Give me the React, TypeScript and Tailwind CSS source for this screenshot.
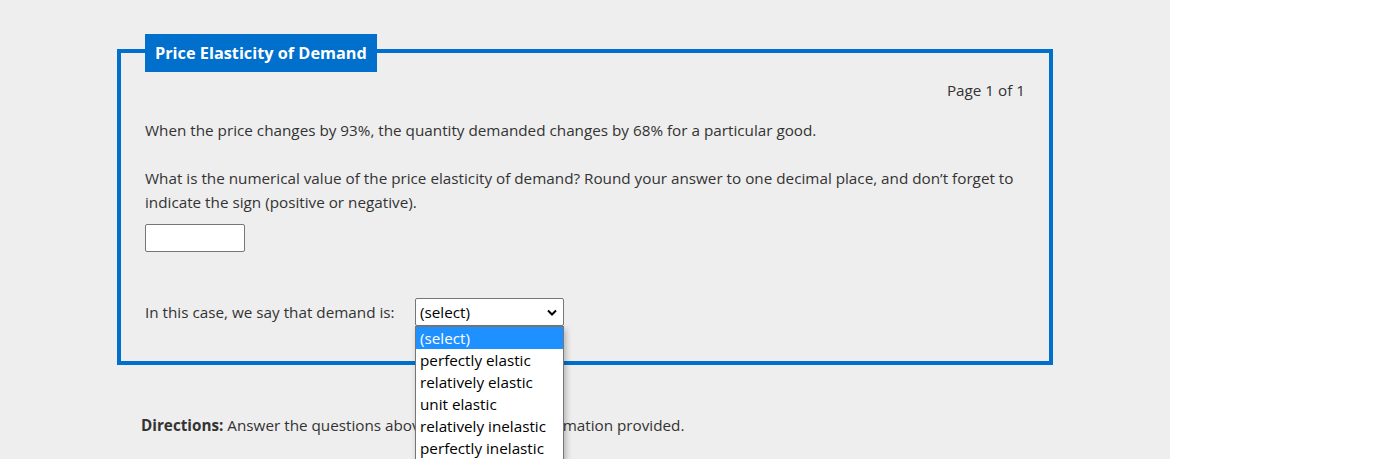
import React from "react";

const font = { fontFamily: '"Open Sans", "Noto Sans", sans-serif' };

const options = [
  "(select)",
  "perfectly elastic",
  "relatively elastic",
  "unit elastic",
  "relatively inelastic",
  "perfectly inelastic",
];

export default function App() {
  return (
    <div className="flex w-full h-[459px] bg-white overflow-hidden" style={font}>
      <div className="w-[1170px] shrink-0 bg-[#eeeeee] pt-[49px] pl-[117px] text-[#333333] text-[15.25px] leading-[24px]">
        <div className="relative w-[936px] h-[316px] border-4 border-[#0070cc] px-6 pt-[25px]">
          <div className="absolute left-6 -top-[19px] h-[38px] bg-[#0070cc] px-[10px] flex items-center text-white font-bold text-[16.3px]">
            Price Elasticity of Demand
          </div>
          <div className="text-right">Page 1 of 1</div>
          <p className="mt-4">
            When the price changes by 93%, the quantity demanded changes by 68% for a particular good.
          </p>
          <p className="mt-6">
            What is the numerical value of the price elasticity of demand? Round your answer to one decimal place, and don’t forget to indicate the sign (positive or negative).
          </p>
          <div className="mt-[10px] w-[100px] h-[28px] bg-white border border-[#767676] rounded-[2px]" />
          <div className="mt-[46px] flex items-center">
            <div className="w-[270px]">In this case, we say that demand is:</div>
            <div className="relative">
              <div className="w-[149px] h-[28px] bg-white border border-[#767676] rounded-[2px] flex items-center justify-between pl-[4px] pr-[6px] text-black">
                <span>(select)</span>
                <svg width="10" height="7" viewBox="0 0 10 7">
                  <path d="M1 1.5 L5 5.5 L9 1.5" fill="none" stroke="#000" strokeWidth="2" />
                </svg>
              </div>
              <div className="absolute left-0 top-[28px] w-[149px] bg-white border border-[#767676] shadow-[2px_3px_6px_rgba(0,0,0,0.25)] z-10 text-black">
                {options.map((o, i) => (
                  <div
                    key={o}
                    className={
                      "h-[22px] leading-[22px] pl-[4px] whitespace-nowrap " +
                      (i === 0 ? "bg-[#1e90ff] text-white" : "")
                    }
                  >
                    {o}
                  </div>
                ))}
              </div>
            </div>
          </div>
        </div>
        <p className="mt-[48px] ml-6">
          <b>Directions:</b> Answer the questions above based on the information provided.
        </p>
      </div>
      <div className="flex-1 bg-white" />
    </div>
  );
}
